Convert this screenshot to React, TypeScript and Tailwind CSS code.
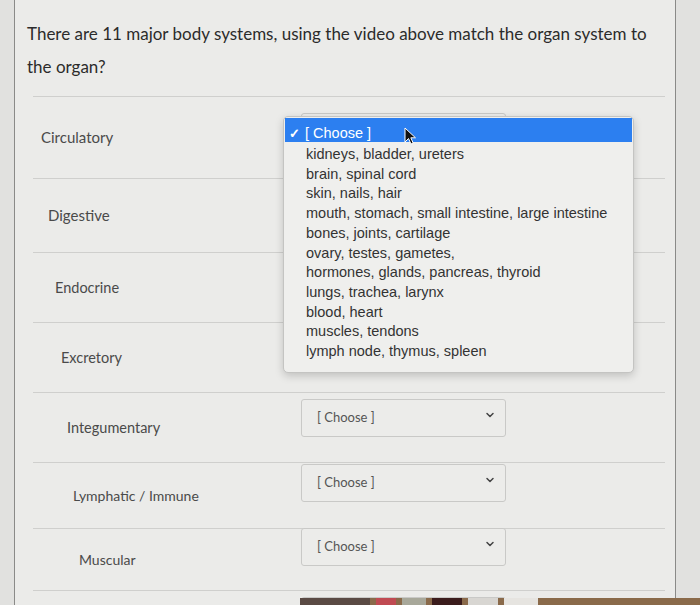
import { ChevronDown } from 'lucide-react';

const rows = [
  { label: 'Circulatory', h: 'h-[82px]', pl: 'pl-[8px]', mt: 'mt-[16px]', fs: 'text-[15px]', hidden: true },
  { label: 'Digestive', h: 'h-[74px]', pl: 'pl-[15px]', mt: 'mt-[8px]', fs: 'text-[15px]', hidden: true },
  { label: 'Endocrine', h: 'h-[70px]', pl: 'pl-[22px]', mt: 'mt-[7px]', fs: 'text-[14.5px]', hidden: true },
  { label: 'Excretory', h: 'h-[70px]', pl: 'pl-[28px]', mt: 'mt-[8px]', fs: 'text-[14.5px]', hidden: true },
  { label: 'Integumentary', h: 'h-[70px]', pl: 'pl-[34px]', mt: 'mt-[6px]', fs: 'text-[14.5px]', hidden: false },
  { label: 'Lymphatic / Immune', h: 'h-[66px]', pl: 'pl-[40px]', mt: 'mt-[1px]', fs: 'text-[14px]', hidden: false },
  { label: 'Muscular', h: 'h-[62px]', pl: 'pl-[46px]', mt: 'mt-[-1px]', fs: 'text-[14px]', hidden: false },
];

const options = [
  'kidneys, bladder, ureters',
  'brain, spinal cord',
  'skin, nails, hair',
  'mouth, stomach, small intestine, large intestine',
  'bones, joints, cartilage',
  'ovary, testes, gametes,',
  'hormones, glands, pancreas, thyroid',
  'lungs, trachea, larynx',
  'blood, heart',
  'muscles, tendons',
  'lymph node, thymus, spleen',
];

// closed select; "empty" ones sit under the open listbox or off the bottom
function Select({ mt, empty }: { mt: string; empty?: boolean }) {
  return (
    <div
      className={`${mt} self-start w-[205px] h-[38px] shrink-0 rounded-[3px] border border-[#c9c9c7] bg-[#ececea] flex items-center justify-between pl-[15px] pr-[9px]`}
    >
      {!empty && <span className="text-[13px] text-[#555]">[ Choose ]</span>}
      {!empty && <ChevronDown size={12} strokeWidth={3} className="text-[#444] -mt-[6px]" />}
    </div>
  );
}

export default function App() {
  return (
    <div className="relative w-[700px] h-[605px] overflow-hidden bg-[#e1e1df] font-['Lato',sans-serif]">
      {/* question card */}
      <div className="ml-[14px] w-[662px] h-[605px] bg-[#ebebe9] border-l border-r border-[#8a8a88]">
        <p className="pl-[12px] pr-[6px] pt-[17px] text-[17px] leading-[33px] text-[#2b2b2b]">
          There are 11 major body systems, using the video above match the organ system to the organ?
        </p>

        <div className="mt-[13px] ml-[18px] mr-[10px]">
          {rows.map((r) => (
            <div key={r.label} className={`${r.h} border-t border-[#cfcfcd] flex`}>
              <div className={`w-[268px] shrink-0 self-center ${r.pl} ${r.fs} text-[#4a4a4a]`}>
                {r.label}
              </div>
              <Select mt={r.mt} empty={r.hidden} />
            </div>
          ))}
          <div className="h-[20px] border-t border-[#cfcfcd] flex">
            <div className="w-[268px] shrink-0" />
            <Select mt="mt-[6px]" empty />
          </div>
        </div>
      </div>

      {/* open listbox */}
      <div className="absolute left-[283px] top-[116px] w-[351px] h-[257px] rounded-[5px] border border-[#c4c4c2] bg-[#efefed] shadow-[0_3px_8px_rgba(0,0,0,0.18)] pt-[1px] font-['Liberation_Sans',sans-serif] text-[14.5px] leading-[19.7px] text-[#333]">
        <div className="mx-[1px] h-[24px] pt-[6px] bg-[#2c7ff0] text-white flex">
          <span className="w-[20px] pl-[4px] text-[13px] font-bold">✓</span>
          <span>[ Choose ]</span>
        </div>
        <div className="mt-[3px]">
          {options.map((o) => (
            <div key={o} className="pl-[22px] whitespace-nowrap">
              {o}
            </div>
          ))}
        </div>
      </div>

      {/* mouse pointer */}
      <svg className="absolute left-[404px] top-[127px]" width="13" height="19" viewBox="0 0 13 19">
        <path d="M1 1 L1 15 L4.5 11.5 L7 17 L9.2 16 L6.8 10.8 L11.5 10.8 Z" fill="#111" stroke="#fff" strokeWidth="1" />
      </svg>

      {/* dock strip */}
      <div className="absolute left-[300px] right-0 bottom-0 h-[7px] flex gap-[6px] bg-[#8a6a4a]">
        <div className="w-[70px] bg-[#5a4a44]" />
        <div className="w-[20px] bg-[#c04a52]" />
        <div className="w-[24px] bg-[#a8a89a]" />
        <div className="w-[30px] bg-[#3b1c1c]" />
        <div className="w-[30px] bg-[#d8d6d2]" />
        <div className="w-[34px] bg-[#e6e4e0]" />
      </div>
    </div>
  );
}
